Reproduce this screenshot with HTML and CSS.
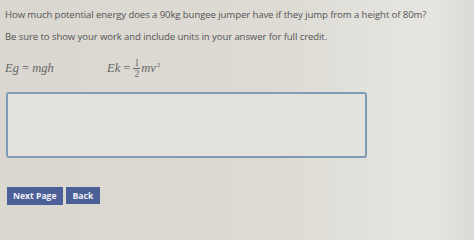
FILE: index.html
```html
<!DOCTYPE html>
<html>
<head>
<meta charset="utf-8">
<link rel="stylesheet" href="styles.css">
</head>
<body>
<div class="page">
  <p class="q">How much potential energy does a 90kg bungee jumper have if they jump from a height of 80m?</p>
  <p class="q q2">Be sure to show your work and include units in your answer for full credit.</p>
  <div class="formulas">
    <span class="math eg"><i>Eg</i> = <i>mgh</i></span>
    <span class="math ek"><span class="lhs"><i>Ek</i> =</span><span class="frac"><span class="num">1</span><span class="den">2</span></span><span class="rhs"><i>mv</i><sup>2</sup></span></span>
  </div>
  <div class="answer"></div>
  <div class="buttons">
    <button class="btn next">Next Page</button>
    <button class="btn back">Back</button>
  </div>
</div>
</body>
</html>
```
FILE: styles.css
```css
html, body {
  margin: 0;
  padding: 0;
}
body {
  width: 474px;
  height: 227px;
  overflow: hidden;
  background: linear-gradient(90deg, #d9d7d0 0%, #dddbd4 60%, #e6e5e0 90%, #dcdbd6 100%);
  font-family: "Open Sans", sans-serif;
  color: #555555;
}
.page {
  padding: 9px 0 0 5px;
}
.q {
  margin: 0;
  font-size: 9.6px;
  line-height: 12px;
  white-space: nowrap;
  letter-spacing: -0.1px;
}
.q2 {
  margin-top: 10px;
}
.formulas {
  display: flex;
  align-items: center;
  margin-top: 13px;
  height: 24px;
  font-family: "Liberation Serif", serif;
  font-size: 12.5px;
  color: #666;
}
.math i {
  font-style: italic;
}
.eg {
  width: 102px;
}
.ek {
  display: inline-flex;
  align-items: center;
}
.lhs {
  margin-right: 3px;
}
.frac {
  display: inline-flex;
  flex-direction: column;
  align-items: center;
  font-size: 9.5px;
  line-height: 10px;
  margin-right: 1px;
}
.num {
  border-bottom: 1px solid #666;
  padding: 0 1px;
}
.rhs {
  line-height: 12px;
}
sup {
  font-size: 7px;
  line-height: 0;
  vertical-align: 5px;
  margin-left: 1px;
}
.answer {
  margin-top: 12px;
  margin-left: 1px;
  width: 357px;
  height: 62px;
  border: 2px solid #7f9cb6;
  border-radius: 3px;
  background: #e3e2dd;
}
.buttons {
  display: flex;
  gap: 3px;
  margin-top: 29px;
  margin-left: 2px;
}
.btn {
  border: none;
  background: #4b5f98;
  color: #f0f0f5;
  font-family: "Open Sans", sans-serif;
  font-weight: 700;
  font-size: 8.6px;
  height: 18px;
  padding: 0 6px;
  border-radius: 0;
}
.back {
  height: 17px;
  padding: 0 7px;
}
```
